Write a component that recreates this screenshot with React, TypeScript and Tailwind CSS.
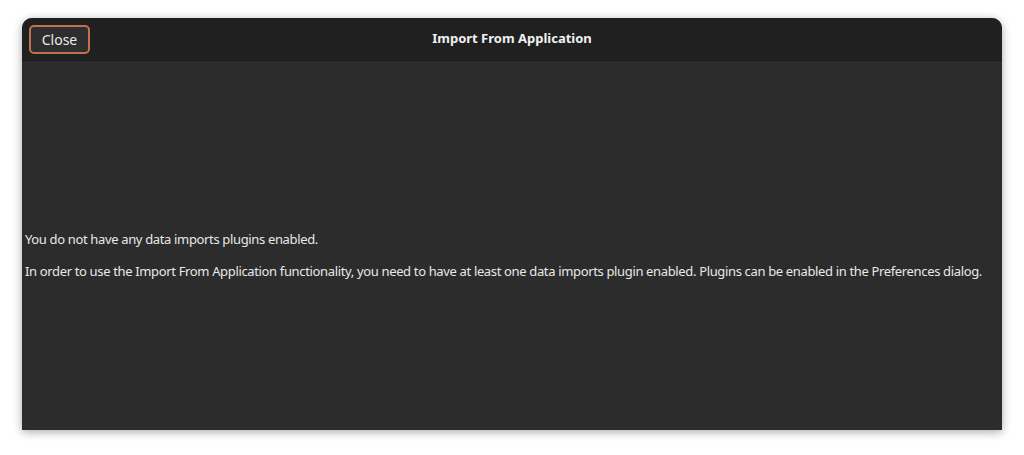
export default function App() {
  return (
    <div className="w-[1024px] h-[455px] bg-white pt-[18px] pl-[22px]" style={{ fontFamily: '"Noto Sans", sans-serif' }}>
      <div className="w-[980px] h-[412px] rounded-t-[10px] overflow-hidden flex flex-col shadow-[0_2px_10px_rgba(0,0,0,0.35)] bg-[#2c2c2c]">
        <div className="relative h-[43px] bg-[#202020] border-b border-[#1a1a1a] flex items-center justify-center shrink-0">
          <button className="absolute left-[7px] top-[7px] h-[29px] w-[61px] rounded-[5px] border-2 border-[#c2714f] bg-[#2e2e2e] text-[#e8e8e8] text-[14px]">Close</button>
          <span className="text-[13px] font-bold text-[#f0f0f0]">Import From Application</span>
        </div>
        <div className="flex-1 flex flex-col justify-center pl-[3px] pt-[20px] text-[13px] text-[#e8e8e8] gap-[13px] tracking-[-0.35px] whitespace-nowrap">
          <p>You do not have any data imports plugins enabled.</p>
          <p>In order to use the Import From Application functionality, you need to have at least one data imports plugin enabled. Plugins can be enabled in the Preferences dialog.</p>
        </div>
      </div>
    </div>
  );
}
